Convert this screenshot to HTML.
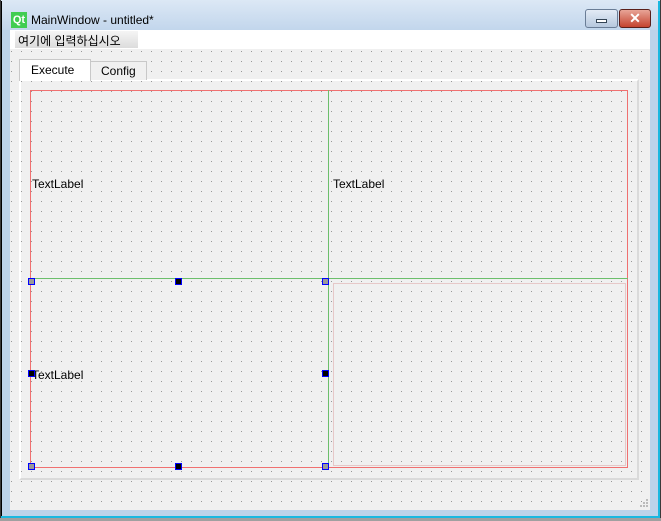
<!DOCTYPE html>
<html><head><meta charset="utf-8"><style>
*{margin:0;padding:0;box-sizing:border-box}
body{width:661px;height:521px;position:relative;overflow:hidden;background:#a0a0a0;font-family:"Liberation Sans","Noto Sans CJK KR",sans-serif;font-size:12px}
.a{position:absolute}
.h{position:absolute;width:7px;height:7px;border:1px solid #0000ff;background:#999}
.h.k{background:#000}
</style></head><body>
<div class="a" style="left:0;top:0;width:661px;height:518px;background:#bcd3ea;border:1px solid #3a3a3a;border-bottom:none"></div>
<div class="a" style="left:1px;top:0;width:659px;height:30px;background:linear-gradient(#dce8f5,#c2d6ec)"></div>
<div class="a" style="left:1px;top:1px;width:1px;height:517px;background:#000"></div>
<div class="a" style="left:658px;top:1px;width:2px;height:517px;background:#19b8e0"></div>
<div class="a" style="left:1px;top:516px;width:659px;height:2px;background:#19b8e0"></div>
<div class="a" style="left:11px;top:12px;width:16px;height:16px;background:#41cd52;color:#fff;font-weight:bold;font-size:11px;line-height:16px;text-align:center">Qt</div>
<div class="a" style="left:31px;top:13px;font-size:12px;color:#000">MainWindow - untitled*</div>
<div class="a" style="left:585px;top:9px;width:33px;height:19px;border:1px solid #6a7d96;border-radius:3px;background:linear-gradient(#e3ebf5,#b6c8de)"></div>
<div class="a" style="left:596px;top:19px;width:11px;height:4px;border:1px solid #345;background:#fff"></div>
<div class="a" style="left:619px;top:9px;width:32px;height:19px;border:1px solid #5a1f1a;border-radius:3px;background:linear-gradient(#e8a597,#c4432f);color:#fff;font-weight:bold;font-size:14px;line-height:17px;text-align:center">✕</div>
<div class="a" style="left:10px;top:30px;width:640px;height:19px;background:#fff"></div>
<div class="a" style="left:15px;top:31px;width:123px;height:17px;background:linear-gradient(#f5f5f5,#dcdcdc);padding:1px 0 0 3px;font-size:12px">여기에 입력하십시오</div>
<svg class="a" style="left:10px;top:49px" width="640" height="461"><defs><pattern id="p" width="10" height="10" patternUnits="userSpaceOnUse"><rect x="1" y="2" width="1" height="1" fill="#999"/></pattern></defs><rect width="640" height="461" fill="#f0f0f0"/><rect width="640" height="461" fill="url(#p)"/></svg>
<div class="a" style="left:19px;top:79px;width:620px;height:401px;border:2px solid #fff;border-right-color:#dadada;border-bottom-color:#dadada"></div>
<div class="a" style="left:90px;top:61px;width:57px;height:19px;background:#f0f0f0;border:1px solid #c8c8c8;border-bottom:none;padding:2px 0 0 10px;font-size:12px">Config</div>
<div class="a" style="left:19px;top:59px;width:72px;height:22px;background:#fff;border:1px solid #c8c8c8;border-bottom:none;padding:3px 0 0 11px;font-size:12px">Execute</div>
<div class="a" style="left:333px;top:283px;width:293px;height:183px;border:1px solid #e6c8c8"></div>
<div class="a" style="left:30px;top:90px;width:598px;height:378px;border:1px solid #f07070"></div>
<div class="a" style="left:30px;top:278px;width:598px;height:1px;background:#6cbf6c"></div>
<div class="a" style="left:328px;top:90px;width:1px;height:378px;background:#6cbf6c"></div>
<div class="a" style="left:32px;top:177px">TextLabel</div>
<div class="a" style="left:333px;top:177px">TextLabel</div>
<div class="a" style="left:32px;top:368px">TextLabel</div>
<div class="h" style="left:28px;top:278px"></div>
<div class="h k" style="left:175px;top:278px"></div>
<div class="h" style="left:322px;top:278px"></div>
<div class="h k" style="left:28px;top:370px"></div>
<div class="h k" style="left:322px;top:370px"></div>
<div class="h" style="left:28px;top:463px"></div>
<div class="h k" style="left:175px;top:463px"></div>
<div class="h" style="left:322px;top:463px"></div>
<svg class="a" style="left:639px;top:499px" width="10" height="10"><rect x="7" y="0" width="2" height="2" fill="#bbb"/><rect x="4" y="3" width="2" height="2" fill="#bbb"/><rect x="7" y="3" width="2" height="2" fill="#bbb"/><rect x="1" y="6" width="2" height="2" fill="#bbb"/><rect x="4" y="6" width="2" height="2" fill="#bbb"/><rect x="7" y="6" width="2" height="2" fill="#bbb"/></svg>
</body></html>
